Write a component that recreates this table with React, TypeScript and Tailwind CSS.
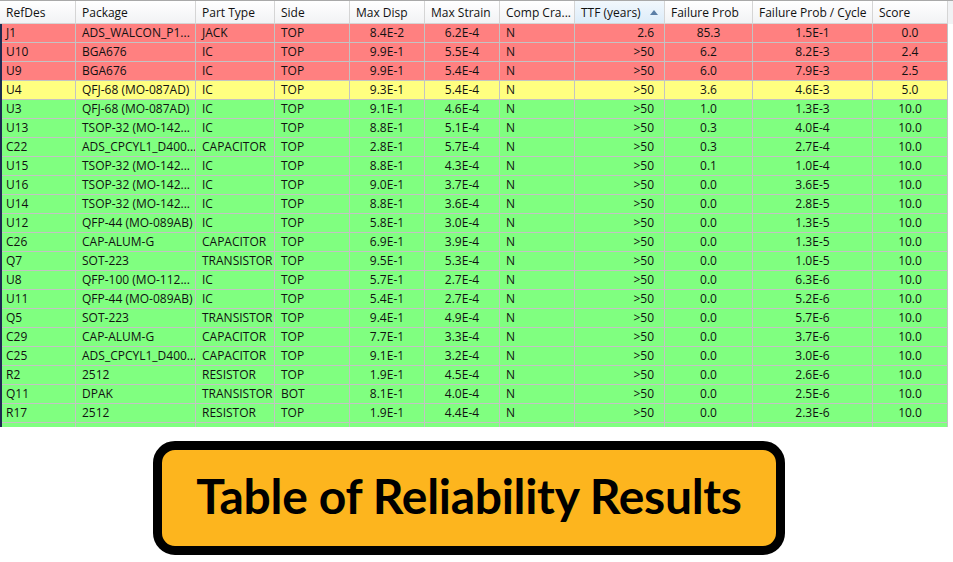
import React from 'react';

type Row = {
  ref: string;
  pkg: string;
  type: string;
  side: string;
  disp: string;
  strain: string;
  crack: string;
  ttf: string;
  prob: string;
  cycle: string;
  score: string;
  tone: 'red' | 'yellow' | 'green';
};

const rows: Row[] = [
  { ref: 'J1', pkg: 'ADS_WALCON_P1...', type: 'JACK', side: 'TOP', disp: '8.4E-2', strain: '6.2E-4', crack: 'N', ttf: '2.6', prob: '85.3', cycle: '1.5E-1', score: '0.0', tone: 'red' },
  { ref: 'U10', pkg: 'BGA676', type: 'IC', side: 'TOP', disp: '9.9E-1', strain: '5.5E-4', crack: 'N', ttf: '>50', prob: '6.2', cycle: '8.2E-3', score: '2.4', tone: 'red' },
  { ref: 'U9', pkg: 'BGA676', type: 'IC', side: 'TOP', disp: '9.9E-1', strain: '5.4E-4', crack: 'N', ttf: '>50', prob: '6.0', cycle: '7.9E-3', score: '2.5', tone: 'red' },
  { ref: 'U4', pkg: 'QFJ-68 (MO-087AD)', type: 'IC', side: 'TOP', disp: '9.3E-1', strain: '5.4E-4', crack: 'N', ttf: '>50', prob: '3.6', cycle: '4.6E-3', score: '5.0', tone: 'yellow' },
  { ref: 'U3', pkg: 'QFJ-68 (MO-087AD)', type: 'IC', side: 'TOP', disp: '9.1E-1', strain: '4.6E-4', crack: 'N', ttf: '>50', prob: '1.0', cycle: '1.3E-3', score: '10.0', tone: 'green' },
  { ref: 'U13', pkg: 'TSOP-32 (MO-142...', type: 'IC', side: 'TOP', disp: '8.8E-1', strain: '5.1E-4', crack: 'N', ttf: '>50', prob: '0.3', cycle: '4.0E-4', score: '10.0', tone: 'green' },
  { ref: 'C22', pkg: 'ADS_CPCYL1_D400...', type: 'CAPACITOR', side: 'TOP', disp: '2.8E-1', strain: '5.7E-4', crack: 'N', ttf: '>50', prob: '0.3', cycle: '2.7E-4', score: '10.0', tone: 'green' },
  { ref: 'U15', pkg: 'TSOP-32 (MO-142...', type: 'IC', side: 'TOP', disp: '8.8E-1', strain: '4.3E-4', crack: 'N', ttf: '>50', prob: '0.1', cycle: '1.0E-4', score: '10.0', tone: 'green' },
  { ref: 'U16', pkg: 'TSOP-32 (MO-142...', type: 'IC', side: 'TOP', disp: '9.0E-1', strain: '3.7E-4', crack: 'N', ttf: '>50', prob: '0.0', cycle: '3.6E-5', score: '10.0', tone: 'green' },
  { ref: 'U14', pkg: 'TSOP-32 (MO-142...', type: 'IC', side: 'TOP', disp: '8.8E-1', strain: '3.6E-4', crack: 'N', ttf: '>50', prob: '0.0', cycle: '2.8E-5', score: '10.0', tone: 'green' },
  { ref: 'U12', pkg: 'QFP-44 (MO-089AB)', type: 'IC', side: 'TOP', disp: '5.8E-1', strain: '3.0E-4', crack: 'N', ttf: '>50', prob: '0.0', cycle: '1.3E-5', score: '10.0', tone: 'green' },
  { ref: 'C26', pkg: 'CAP-ALUM-G', type: 'CAPACITOR', side: 'TOP', disp: '6.9E-1', strain: '3.9E-4', crack: 'N', ttf: '>50', prob: '0.0', cycle: '1.3E-5', score: '10.0', tone: 'green' },
  { ref: 'Q7', pkg: 'SOT-223', type: 'TRANSISTOR', side: 'TOP', disp: '9.5E-1', strain: '5.3E-4', crack: 'N', ttf: '>50', prob: '0.0', cycle: '1.0E-5', score: '10.0', tone: 'green' },
  { ref: 'U8', pkg: 'QFP-100 (MO-112...', type: 'IC', side: 'TOP', disp: '5.7E-1', strain: '2.7E-4', crack: 'N', ttf: '>50', prob: '0.0', cycle: '6.3E-6', score: '10.0', tone: 'green' },
  { ref: 'U11', pkg: 'QFP-44 (MO-089AB)', type: 'IC', side: 'TOP', disp: '5.4E-1', strain: '2.7E-4', crack: 'N', ttf: '>50', prob: '0.0', cycle: '5.2E-6', score: '10.0', tone: 'green' },
  { ref: 'Q5', pkg: 'SOT-223', type: 'TRANSISTOR', side: 'TOP', disp: '9.4E-1', strain: '4.9E-4', crack: 'N', ttf: '>50', prob: '0.0', cycle: '5.7E-6', score: '10.0', tone: 'green' },
  { ref: 'C29', pkg: 'CAP-ALUM-G', type: 'CAPACITOR', side: 'TOP', disp: '7.7E-1', strain: '3.3E-4', crack: 'N', ttf: '>50', prob: '0.0', cycle: '3.7E-6', score: '10.0', tone: 'green' },
  { ref: 'C25', pkg: 'ADS_CPCYL1_D400...', type: 'CAPACITOR', side: 'TOP', disp: '9.1E-1', strain: '3.2E-4', crack: 'N', ttf: '>50', prob: '0.0', cycle: '3.0E-6', score: '10.0', tone: 'green' },
  { ref: 'R2', pkg: '2512', type: 'RESISTOR', side: 'TOP', disp: '1.9E-1', strain: '4.5E-4', crack: 'N', ttf: '>50', prob: '0.0', cycle: '2.6E-6', score: '10.0', tone: 'green' },
  { ref: 'Q11', pkg: 'DPAK', type: 'TRANSISTOR', side: 'BOT', disp: '8.1E-1', strain: '4.0E-4', crack: 'N', ttf: '>50', prob: '0.0', cycle: '2.5E-6', score: '10.0', tone: 'green' },
  { ref: 'R17', pkg: '2512', type: 'RESISTOR', side: 'TOP', disp: '1.9E-1', strain: '4.4E-4', crack: 'N', ttf: '>50', prob: '0.0', cycle: '2.3E-6', score: '10.0', tone: 'green' },
];

const toneBg = {
  red: 'bg-[#ff8080]',
  yellow: 'bg-[#ffff80]',
  green: 'bg-[#80ff80]',
};

const headCols = 'grid grid-cols-[76px_120px_79px_75px_75px_75px_75px_90px_88px_120px_75px]';
// body sits inside a 2px dark left edge, so the first column loses 2px
const bodyCols = 'grid grid-cols-[74px_120px_79px_75px_75px_75px_75px_90px_88px_120px_75px]';
const cell = 'h-[19px] border-r border-b border-[#c3c3c3] px-[6px] leading-[18px] whitespace-nowrap overflow-hidden';
const firstCell = 'h-[19px] border-r border-b border-[#c3c3c3] pl-[4px] leading-[18px] whitespace-nowrap overflow-hidden';

const headers = ['RefDes', 'Package', 'Part Type', 'Side', 'Max Disp', 'Max Strain', 'Comp Cra...', 'TTF (years)', 'Failure Prob', 'Failure Prob / Cycle', 'Score'];

const App: React.FC = () => {
  return (
    <div className="w-[953px] h-[562px] bg-white overflow-hidden font-['Open_Sans','Noto_Sans',sans-serif] text-[12px] text-[#111]">
      {/* results grid */}
      <div className="flex">
        <div className="w-[948px]">
          <div className={`${headCols} h-[24px] border-t border-[#a9a9a9] bg-gradient-to-b from-white to-[#f1f2f4]`}>
            {headers.map((h) => (
              <div
                key={h}
                className={`relative h-[23px] border-r border-b border-[#d5d5d5] px-[6px] leading-[23px] whitespace-nowrap overflow-hidden ${
                  h === 'TTF (years)' ? 'bg-gradient-to-b from-[#f2f8fd] to-[#dcecf9]' : ''
                }`}
              >
                {h}
                {h === 'TTF (years)' && (
                  <svg className="absolute right-[6px] top-[9px]" width="8" height="5" viewBox="0 0 8 5">
                    <path d="M0 5 L4 0 L8 5 Z" fill="#5b7ea6" />
                  </svg>
                )}
              </div>
            ))}
          </div>
          <div className="border-l-2 border-[#1d2b4f]">
            {rows.map((r) => (
              <div key={r.ref} className={`${bodyCols} ${toneBg[r.tone]}`}>
                <div className={firstCell}>{r.ref}</div>
                <div className={cell}>{r.pkg}</div>
                <div className={cell}>{r.type}</div>
                <div className={cell}>{r.side}</div>
                <div className={`${cell} text-center`}>{r.disp}</div>
                <div className={`${cell} text-center`}>{r.strain}</div>
                <div className={cell}>{r.crack}</div>
                <div className={`${cell} text-right pr-[10px]`}>{r.ttf}</div>
                <div className={`${cell} text-center`}>{r.prob}</div>
                <div className={`${cell} text-center`}>{r.cycle}</div>
                <div className={`${cell} text-center`}>{r.score}</div>
              </div>
            ))}
            <div className={`${bodyCols} bg-[#80ff80]`}>
              {headers.map((h) => (
                <div key={h} className="h-[4px] border-r border-[#c3c3c3]" />
              ))}
            </div>
          </div>
        </div>
        <div className="w-[5px] h-[24px] border-t border-[#a9a9a9] bg-[#f1f2f4]" />
      </div>

      {/* caption button */}
      <div className="pl-[153px] pt-[14px]">
        <div className="w-[632px] h-[114px] rounded-[22px] border-[9px] border-black bg-[#fdb51e] flex items-center justify-center">
          <span className="font-['Lato',sans-serif] font-bold text-[48px] text-black leading-none pb-[4px] tracking-[-0.3px]">
            Table of Reliability Results
          </span>
        </div>
      </div>
    </div>
  );
};

export default App;
